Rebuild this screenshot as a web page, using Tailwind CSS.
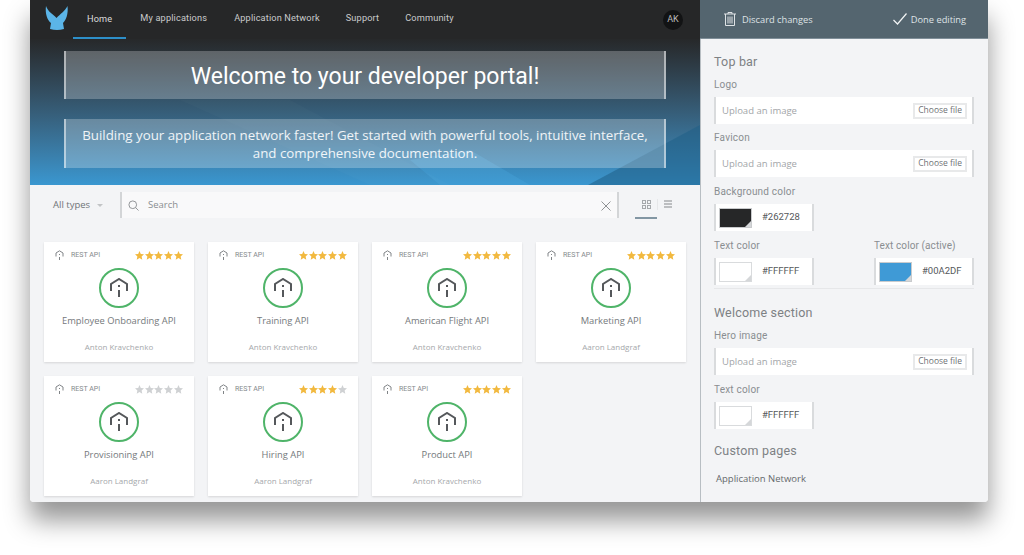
<!DOCTYPE html>
<html lang="en">

<head>
    <meta charset="UTF-8">
    <meta name="viewport" content="width=device-width, initial-scale=1.0">
    <script src="https://cdn.jsdelivr.net/npm/@tailwindcss/browser@4"></script>
    <title>Developer portal</title>
</head>

<body class="bg-white w-[1024px] h-[555px] overflow-hidden font-['Open_Sans',sans-serif]">

    <div class="ml-[30px] w-[958px] h-[502px] flex rounded-b-sm overflow-hidden shadow-[0_18px_26px_rgba(0,0,0,0.42)]">

        <!-- portal preview -->
        <div class="w-[670px] h-full bg-[#f3f4f6] flex flex-col">

            <div class="relative h-[185px] bg-linear-to-b from-[#262728] from-[20%] to-[#3a97d0]">
                <svg class="absolute inset-0" width="670" height="185" viewBox="0 0 670 185">
                    <polygon points="670,125 670,185 558,185" fill="#1f5f86" opacity="0.55" />
                    <polygon points="380,160 410,185 500,185 440,150" fill="#4aa6dc" opacity="0.35" />
                    <polygon points="150,100 340,185 420,185 260,100" fill="#ffffff" opacity="0.02" />
                </svg>

                <nav class="relative h-[39px] bg-[#262728] flex items-center font-['Roboto',sans-serif] text-[9.2px] tracking-[0.15px] text-[#c9cacb]">
                    <svg class="ml-[15px] w-[24px] h-[26px] -mt-[3px]" viewBox="0 0 24 26">
                        <path d="M1 1C3 7 8 9 11.5 13C15 9 20 6 22.5 1C23.5 9 21 15 18 18L19 24Q12 26 5 24L6 18C2 15 0 8 1 1Z" fill="#5bb5e8" />
                    </svg>
                    <a class="ml-[4px] h-[39px] px-[14px] flex items-center text-[#dcdcdc] border-b-2 border-[#2d8fc9]">Home</a>
                    <a class="px-[14px] -mt-[3px]">My applications</a>
                    <a class="px-[13px] -mt-[3px]">Application Network</a>
                    <a class="px-[13px] -mt-[3px]">Support</a>
                    <a class="px-[13px] -mt-[3px]">Community</a>
                    <span class="ml-auto mr-[17px] w-[20px] h-[20px] rounded-full bg-[#121314] flex items-center justify-center text-[9px] tracking-normal text-[#bbbbbb]">AK</span>
                </nav>

                <div class="relative mx-[34px] mt-[12px] h-[48px] pt-[4px] bg-white/25 border-x-2 border-white/50 flex items-center justify-center font-['Roboto',sans-serif] text-[23px] text-white">
                    Welcome to your developer portal!
                </div>
                <div class="relative mx-[34px] mt-[20px] h-[49px] bg-white/25 border-x-2 border-white/50 flex items-center justify-center text-center text-[13.3px] leading-[18px] text-white/90">
                    <p>Building your application network faster! Get started with powerful tools, intuitive interface,<br>and comprehensive documentation.</p>
                </div>
            </div>

            <!-- filters -->
            <div class="h-[26px] mt-[7px] flex items-stretch text-[#6f7376]">
                <div class="w-[92px] pl-[23px] pt-[1px] flex items-center gap-[7px] text-[9.5px] border-r-2 border-[#d3d5d7]">
                    <span>All types</span>
                    <span class="w-0 h-0 border-x-[3.5px] border-x-transparent border-t-[3px] border-t-[#c2c4c6]"></span>
                </div>
                <div class="w-[497px] bg-[#f9f9fa] pt-[1px] flex items-center border-r-2 border-[#d3d5d7]">
                    <svg class="ml-[6px] w-[11px] h-[11px]" viewBox="0 0 12 12" fill="none" stroke="#8a8d90" stroke-width="1">
                        <circle cx="5.2" cy="5.2" r="4.2" />
                        <path d="M8.2 8.2L11.5 11.5" />
                    </svg>
                    <span class="ml-[9px] text-[9.5px] text-[#8a8d90]">Search</span>
                    <svg class="ml-auto mr-[6px] w-[10px] h-[10px]" viewBox="0 0 10 10" stroke="#8f9295" stroke-width="1">
                        <path d="M0.5 0.5L9.5 9.5M9.5 0.5L0.5 9.5" />
                    </svg>
                </div>
                <div class="relative w-[42px] ml-[16px]">
                    <svg class="absolute left-[7px] top-[8px] w-[9px] h-[9px]" viewBox="0 0 9 9" fill="none" stroke="#a5a8ab" stroke-width="1">
                        <rect x="0.5" y="0.5" width="3" height="3" />
                        <rect x="5.5" y="0.5" width="3" height="3" />
                        <rect x="0.5" y="5.5" width="3" height="3" />
                        <rect x="5.5" y="5.5" width="3" height="3" />
                    </svg>
                    <span class="absolute left-[22px] top-[7px] w-px h-[11px] bg-[#e6e7e9]"></span>
                    <span class="absolute left-0 top-[25px] w-[22px] h-[2px] bg-[#8296a3]"></span>
                    <svg class="absolute left-[29px] top-[8px] w-[8px] h-[8px]" viewBox="0 0 8 8" stroke="#85888b" stroke-width="1">
                        <path d="M0 1H8M0 4H8M0 7H8" />
                    </svg>
                </div>
            </div>

            <!-- cards, filled in below -->
            <div id="cards" class="mt-[24px] ml-[14px] grid grid-cols-[150px_150px_150px_150px] auto-rows-[120px] gap-x-[14px] gap-y-[14px]"></div>
        </div>

        <!-- editor sidebar -->
        <aside class="w-[288px] h-full bg-[#f3f4f6] border-l border-[#b8bec3] text-[#8a8e91] text-[10px]">
            <div class="-ml-px h-[39px] bg-[#54656f] border-b border-[#7f8e98] flex items-center text-[9.3px] text-[#dfe3e6]">
                <svg class="ml-[24px] w-[12px] h-[14px]" viewBox="0 0 12 14" fill="none" stroke="#dfe3e6" stroke-width="1">
                    <path d="M0 2H12M4 2V0.5H8V2M1.5 2V13.5H10.5V2M4 4.5V11.5M6 4.5V11.5M8 4.5V11.5" />
                </svg>
                <span class="ml-[6px] pt-[1px]">Discard changes</span>
                <svg class="ml-[80px] w-[14px] h-[12px]" viewBox="0 0 14 12" fill="none" stroke="#f2f4f5" stroke-width="1.2">
                    <path d="M0.5 7L4.5 11L13.5 0.5" />
                </svg>
                <span class="ml-[4px] pt-[1px]">Done editing</span>
            </div>

            <div class="pl-[13px] pr-[14px]">
                <h2 class="mt-[15px] h-[16px] leading-[16px] font-['Roboto',sans-serif] text-[12.5px] tracking-[0.2px] text-[#7d8184]">Top bar</h2>
                <p class="mt-[8px] h-[13px] leading-[13px] font-['Roboto',sans-serif] tracking-[0.2px]">Logo</p>
                <div class="mt-[6px] h-[27px] bg-white border-x-2 border-[#d9dbdd] flex items-center pl-[6px] pr-[5px] text-[9.5px] text-[#a2a5a8]">
                    <span class="mt-[2px]">Upload an image</span>
                    <span class="ml-auto h-[16px] px-[3px] border-2 border-[#e8e9ea] flex items-center text-[8.5px] text-[#6f7376]">Choose file</span>
                </div>
                <p class="mt-[7px] h-[13px] leading-[13px] font-['Roboto',sans-serif] tracking-[0.2px]">Favicon</p>
                <div class="mt-[6px] h-[27px] bg-white border-x-2 border-[#d9dbdd] flex items-center pl-[6px] pr-[5px] text-[9.5px] text-[#a2a5a8]">
                    <span class="mt-[2px]">Upload an image</span>
                    <span class="ml-auto h-[16px] px-[3px] border-2 border-[#e8e9ea] flex items-center text-[8.5px] text-[#6f7376]">Choose file</span>
                </div>
                <p class="mt-[8px] h-[13px] leading-[13px] font-['Roboto',sans-serif] tracking-[0.2px]">Background color</p>
                <div class="mt-[6px] w-[100px] h-[27px] bg-white border-x-2 border-[#d9dbdd] flex items-center pl-[3px] font-['Roboto',sans-serif] text-[9.5px] text-[#55585b]">
                    <span class="relative w-[33px] h-[20px] bg-[#262728] border border-[#c9cbcd] overflow-hidden"><span class="absolute right-0 bottom-0 w-0 h-0 border-l-[6px] border-l-transparent border-b-[6px] border-b-[#d5d7d9]"></span></span>
                    <span class="ml-[10px]">#262728</span>
                </div>

                <div class="mt-[8px] flex justify-between">
                    <div>
                        <p class="h-[13px] leading-[13px] font-['Roboto',sans-serif] tracking-[0.2px]">Text color</p>
                        <div class="mt-[6px] w-[100px] h-[27px] bg-white border-x-2 border-[#d9dbdd] flex items-center pl-[3px] font-['Roboto',sans-serif] text-[9.5px] text-[#55585b]">
                            <span class="relative w-[33px] h-[20px] bg-white border border-[#d9dbdd] overflow-hidden"><span class="absolute right-0 bottom-0 w-0 h-0 border-l-[6px] border-l-transparent border-b-[6px] border-b-[#d5d7d9]"></span></span>
                            <span class="ml-[10px]">#FFFFFF</span>
                        </div>
                    </div>
                    <div>
                        <p class="h-[13px] leading-[13px] font-['Roboto',sans-serif] tracking-[0.1px]">Text color (active)</p>
                        <div class="mt-[6px] w-[100px] h-[27px] bg-white border-x-2 border-[#d9dbdd] flex items-center pl-[3px] font-['Roboto',sans-serif] text-[9.5px] text-[#55585b]">
                            <span class="relative w-[33px] h-[20px] bg-[#3f9ad6] border border-[#c9cbcd] overflow-hidden"><span class="absolute right-0 bottom-0 w-0 h-0 border-l-[6px] border-l-transparent border-b-[6px] border-b-[#d5d7d9]"></span></span>
                            <span class="ml-[10px]">#00A2DF</span>
                        </div>
                    </div>
                </div>

                <div class="mt-[3px] border-t border-[#e6e7e9]"></div>

                <h2 class="mt-[16px] h-[16px] leading-[16px] font-['Roboto',sans-serif] text-[12.5px] tracking-[0.2px] text-[#7d8184]">Welcome section</h2>
                <p class="mt-[8px] h-[13px] leading-[13px] font-['Roboto',sans-serif] tracking-[0.2px]">Hero image</p>
                <div class="mt-[6px] h-[27px] bg-white border-x-2 border-[#d9dbdd] flex items-center pl-[6px] pr-[5px] text-[9.5px] text-[#a2a5a8]">
                    <span class="mt-[2px]">Upload an image</span>
                    <span class="ml-auto h-[16px] px-[3px] border-2 border-[#e8e9ea] flex items-center text-[8.5px] text-[#6f7376]">Choose file</span>
                </div>
                <p class="mt-[8px] h-[13px] leading-[13px] font-['Roboto',sans-serif] tracking-[0.2px]">Text color</p>
                <div class="mt-[6px] w-[100px] h-[27px] bg-white border-x-2 border-[#d9dbdd] flex items-center pl-[3px] font-['Roboto',sans-serif] text-[9.5px] text-[#55585b]">
                    <span class="relative w-[33px] h-[20px] bg-white border border-[#d9dbdd] overflow-hidden"><span class="absolute right-0 bottom-0 w-0 h-0 border-l-[6px] border-l-transparent border-b-[6px] border-b-[#d5d7d9]"></span></span>
                    <span class="ml-[10px]">#FFFFFF</span>
                </div>

                <h2 class="mt-[14px] h-[16px] leading-[16px] font-['Roboto',sans-serif] text-[12.5px] tracking-[0.2px] text-[#7d8184]">Custom pages</h2>
                <p class="mt-[13px] ml-[2px] text-[9.5px] text-[#65696c]">Application Network</p>
            </div>
        </aside>
    </div>

    <script>
        const apis = [
            { name: "Employee Onboarding API", author: "Anton Kravchenko", stars: 5 },
            { name: "Training API", author: "Anton Kravchenko", stars: 5 },
            { name: "American Flight API", author: "Anton Kravchenko", stars: 5 },
            { name: "Marketing API", author: "Aaron Landgraf", stars: 5 },
            { name: "Provisioning API", author: "Aaron Landgraf", stars: 0 },
            { name: "Hiring API", author: "Aaron Landgraf", stars: 4 },
            { name: "Product API", author: "Anton Kravchenko", stars: 5 }
        ];

        function starRow(count) {
            let result = "";
            for (let i = 0; i < 5; i++) {
                const color = i < count ? "#f2b93f" : "#cfd1d3";
                result += `<svg class="w-[9px] h-[9px]" viewBox="0 0 20 20"><polygon points="10,0 12.9,6.6 20,7.4 14.7,12.2 16.2,19.3 10,15.7 3.8,19.3 5.3,12.2 0,7.4 7.1,6.6" fill="${color}"/></svg>`;
            }
            return result;
        }

        let result = "";
        apis.forEach((api) => {
            result += `<div class="bg-white shadow-[0_1px_2px_rgba(0,0,0,0.12)] flex flex-col items-center">
                <div class="w-full h-[26px] flex items-center pl-[11px] pr-[11px]">
                    <svg class="w-[9px] h-[11px]" viewBox="0 0 9 11" fill="none" stroke="#808487" stroke-width="1">
                        <path d="M1 6.5V3L4.5 0.8L8 3V6.5" />
                        <path d="M4.5 4V5M4.5 7V10" />
                    </svg>
                    <span class="ml-[7px] font-['Roboto',sans-serif] text-[7px] text-[#85898c]">REST API</span>
                    <span class="ml-auto flex gap-[0.8px]">${starRow(api.stars)}</span>
                </div>
                <div class="w-[40px] h-[40px] rounded-full border-2 border-[#4fb469] flex items-center justify-center">
                    <svg class="w-[18px] h-[20px]" viewBox="0 0 18 20" fill="none" stroke="#55585b" stroke-width="2">
                        <path d="M1 13V6L9 1L17 6V13" />
                        <path d="M9 7V9M9 12V19" />
                    </svg>
                </div>
                <p class="mt-[7px] h-[12px] leading-[12px] text-[9.35px] text-[#75797c]">${api.name}</p>
                <p class="mt-[14px] h-[12px] leading-[12px] text-[8px] text-[#a5a8ab]">${api.author}</p>
            </div>`;
        });
        document.getElementById("cards").innerHTML = result;
    </script>

</body>

</html>
